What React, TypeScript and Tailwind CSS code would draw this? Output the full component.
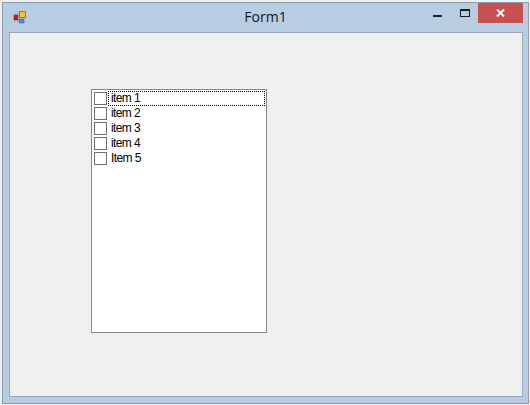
const items = ['item 1', 'item 2', 'item 3', 'item 4', 'Item 5']

function AppIcon() {
  return (
    <svg width="14" height="14" viewBox="0 0 14 14" className="block">
      <rect x="0" y="0" width="14" height="14" fill="#c3ccd8" />
      <rect x="1" y="1" width="12" height="12" fill="#b6c6d8" />
      <rect x="1" y="5" width="4" height="5" fill="#c81e1e" stroke="#7a1010" strokeWidth="0.5" />
      <rect x="6.5" y="1.5" width="6" height="6" fill="#f5c331" stroke="#a87b10" strokeWidth="1" />
      <rect x="6" y="9" width="5" height="4" fill="#4f86e8" stroke="#2f5fc0" strokeWidth="0.5" />
    </svg>
  )
}

export default function App() {
  return (
    <div className="w-[530px] h-[405px] bg-[#f0f0f0] pl-[2px] pt-[2px] overflow-hidden font-['Liberation_Sans',sans-serif]">
      <div className="w-[527px] h-[402px] border border-[#8c9bae] bg-[#b9cde2] flex flex-col">
        {/* Title bar */}
        <div className="h-[29px] grid grid-cols-[1fr_auto_1fr] shrink-0">
          <div className="pl-[10px] pt-[7px]">
            <AppIcon />
          </div>
          <div className="pt-[4px] text-[14px] leading-[20px] text-[#0f1722] font-['Open_Sans',sans-serif]">Form1</div>
          <div className="flex justify-end pr-[5px]">
            <div className="w-[9px] h-[2px] mt-[12px] mr-[18px] bg-[#1c1c1c]" />
            <div className="w-[10px] h-[8px] mt-[6px] mr-[8px] border border-t-2 border-[#1c1c1c]" />
            <div className="w-[45px] h-[20px] bg-[#c75050] flex items-center justify-center">
              <svg width="9" height="8" viewBox="0 0 9 8">
                <path d="M1 0.5 L8 7.5 M8 0.5 L1 7.5" stroke="#ffffff" strokeWidth="2" fill="none" />
              </svg>
            </div>
          </div>
        </div>
        {/* Client area */}
        <div className="w-[514px] h-[365px] ml-[6px] border border-[#98a8bc] bg-[#efefef] pl-[81px] pt-[56px]">
          <div className="w-[176px] h-[244px] border border-[#828790] bg-white pt-[1px] pl-[2px] pr-[1px]">
            {items.map((item, i) => (
              <div key={item} className="h-[15px] flex items-center">
                <div className="w-[13px] h-[13px] border border-[#707070] bg-white shrink-0" />
                <div className={`ml-[1px] flex-1 h-[15px] pl-[2px] text-[12px] leading-[12px] tracking-[-0.6px] text-black border border-dotted ${i === 0 ? 'border-black' : 'border-transparent'}`}>
                  {item}
                </div>
              </div>
            ))}
          </div>
        </div>
      </div>
    </div>
  )
}
